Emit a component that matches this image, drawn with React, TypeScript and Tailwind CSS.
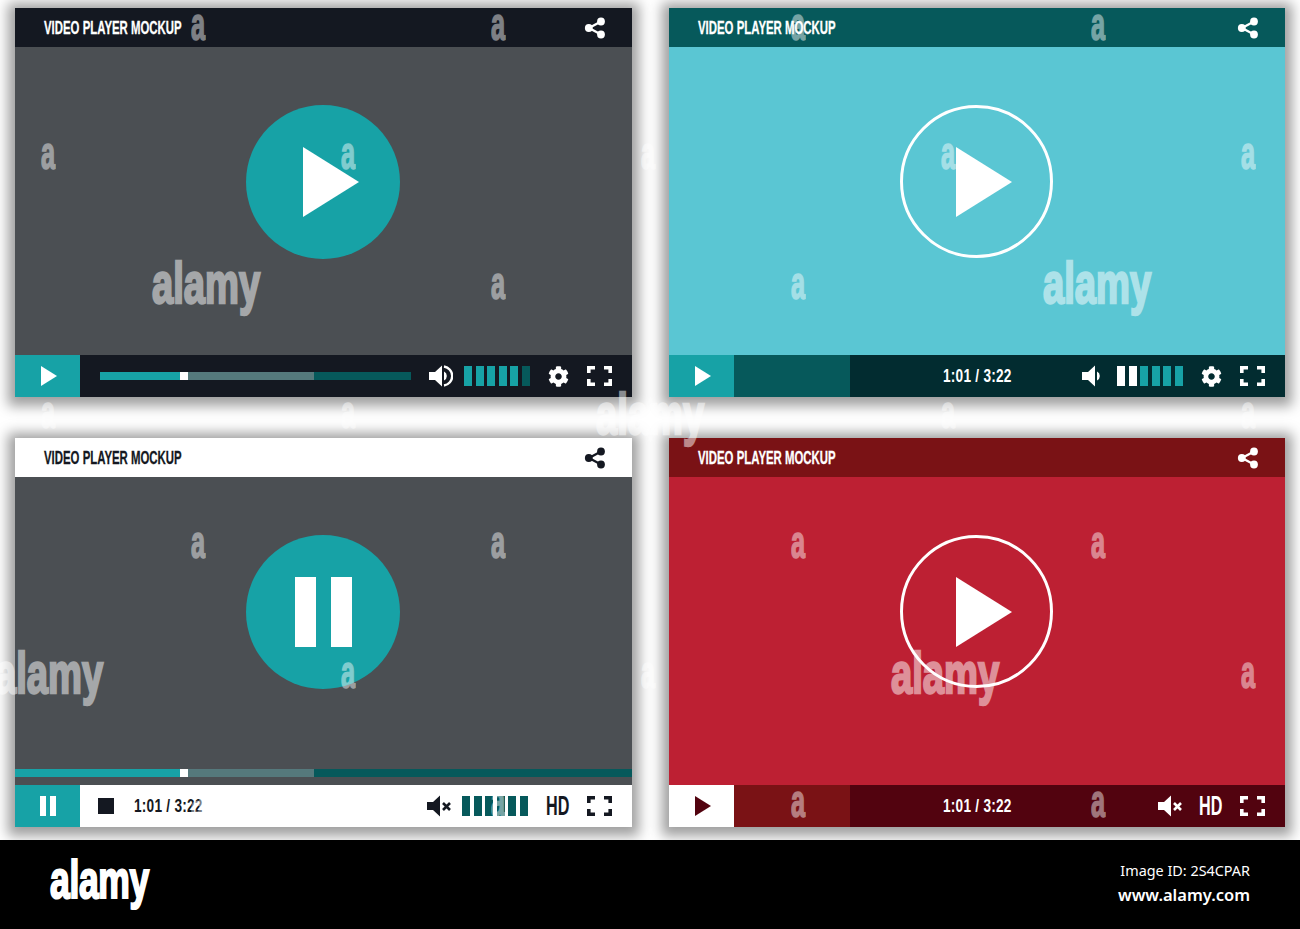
import { FaCog } from "react-icons/fa";
import type { ReactNode } from "react";

const font = "font-['Liberation_Sans',Arial,sans-serif]";

// watermark letters, one class list per tile
const smallMarks = [
  "left-[191px] top-[1px]",
  "left-[491px] top-[1px]",
  "left-[791px] top-[1px]",
  "left-[1091px] top-[1px]",
  "left-[41px] top-[130px]",
  "left-[341px] top-[130px]",
  "left-[641px] top-[130px]",
  "left-[941px] top-[130px]",
  "left-[1241px] top-[130px]",
  "left-[491px] top-[260px]",
  "left-[791px] top-[260px]",
  "left-[41px] top-[389px]",
  "left-[341px] top-[389px]",
  "left-[941px] top-[389px]",
  "left-[1241px] top-[389px]",
  "left-[191px] top-[519px]",
  "left-[491px] top-[519px]",
  "left-[791px] top-[519px]",
  "left-[1091px] top-[519px]",
  "left-[341px] top-[649px]",
  "left-[641px] top-[649px]",
  "left-[1241px] top-[649px]",
  "left-[191px] top-[778px]",
  "left-[491px] top-[778px]",
  "left-[791px] top-[778px]",
  "left-[1091px] top-[778px]",
];

const bigMarks = [
  "left-[152px] top-[255px]",
  "left-[1043px] top-[255px]",
  "left-[596px] top-[386px]",
  "left-[-5px] top-[645px]",
  "left-[891px] top-[645px]",
];

function SmallPlay({ className }: { className: string }) {
  return (
    <svg viewBox="0 0 16 20" className={`h-5 w-4 ${className}`}>
      <polygon points="0,0 16,10 0,20" fill="currentColor" />
    </svg>
  );
}

function ShareIcon() {
  return (
    <svg viewBox="0 0 22 22" className="h-[22px] w-[22px]" fill="currentColor" stroke="currentColor">
      <line x1="5" y1="11" x2="17" y2="4.5" strokeWidth="2.4" />
      <line x1="5" y1="11" x2="17" y2="17.5" strokeWidth="2.4" />
      <circle cx="4.8" cy="11" r="3.9" stroke="none" />
      <circle cx="17" cy="4.5" r="3.9" stroke="none" />
      <circle cx="17" cy="17.5" r="3.9" stroke="none" />
    </svg>
  );
}

function FullscreenIcon() {
  return (
    <svg viewBox="0 0 25 20" className="h-5 w-[25px]" fill="none" stroke="currentColor" strokeWidth="3.6">
      <path d="M1.8 7V1.8H8M17 1.8H23.2V7M1.8 13V18.2H8M17 18.2H23.2V13" />
    </svg>
  );
}

function VolumeIcon({ mode }: { mode: "loud" | "low" | "mute" }) {
  return (
    <svg viewBox="0 0 24 24" className="h-6 w-6" fill="currentColor">
      <polygon points="0,8 6,8 13,1.5 13,22.5 6,16 0,16" />
      {mode === "loud" && (
        <>
          <path d="M15 7.5a5 5 0 0 1 0 9z" />
          <path d="M15 2.5a9.6 9.6 0 0 1 0 19" fill="none" stroke="currentColor" strokeWidth="2.4" />
        </>
      )}
      {mode === "low" && <path d="M15 7.5a5 5 0 0 1 0 9z" />}
      {mode === "mute" && (
        <path d="M16 9l7 7M23 9l-7 7" fill="none" stroke="currentColor" strokeWidth="2.6" />
      )}
    </svg>
  );
}

function VolumeBars({ colors }: { colors: string[] }) {
  return (
    <div className="flex h-5 w-[66px] justify-between">
      {colors.map((c, i) => (
        <div key={i} className={`h-full w-2 ${c}`} />
      ))}
    </div>
  );
}

function Time() {
  return (
    <span className={`${font} block w-[69px] origin-left scale-x-[0.76] whitespace-nowrap text-[18px] leading-none font-bold tracking-[0.3px]`}>
      1:01 / 3:22
    </span>
  );
}

function Hd() {
  return (
    <span className={`${font} block w-[23px] origin-left scale-x-[0.6] text-[27px] leading-none font-bold`}>HD</span>
  );
}

function Progress({ className, playedClass }: { className: string; playedClass: string }) {
  return (
    <div className={`flex h-2 ${className}`}>
      <div className={`shrink-0 bg-[#17a2a6] ${playedClass}`} />
      <div className="w-2 shrink-0 bg-white" />
      <div className="w-[126px] shrink-0 bg-[#55797c]" />
      <div className="flex-1 bg-[#06595b]" />
    </div>
  );
}

type PlayerProps = {
  headerClass: string;
  bodyClass: string;
  center: ReactNode;
  seek?: boolean;
  bar: ReactNode;
  barClass: string;
};

function Player({ headerClass, bodyClass, center, seek, bar, barClass }: PlayerProps) {
  return (
    <div className="flex h-[389px] flex-col shadow-[0_2px_12px_7px_rgba(0,0,0,0.38)]">
      <div className={`flex h-[39px] items-center justify-between pr-[26px] pl-[29px] ${headerClass}`}>
        <span className={`${font} block w-[138px] origin-left scale-x-[0.6] whitespace-nowrap text-[19px] leading-none font-bold [-webkit-text-stroke:0.3px_currentColor]`}>
          VIDEO PLAYER MOCKUP
        </span>
        <ShareIcon />
      </div>
      <div className={`flex h-[308px] flex-col items-center pt-[58px] ${bodyClass}`}>
        {center}
        {seek && (
          <div className="mt-[80px] w-full">
            <Progress className="w-full" playedClass="w-[165px]" />
          </div>
        )}
      </div>
      <div className={`flex h-[42px] items-center ${barClass}`}>{bar}</div>
    </div>
  );
}

const teal = "bg-[#17a2a6]";
const darkTeal = "bg-[#06595b]";

export default function App() {
  return (
    <div className="relative h-[929px] w-[1300px] overflow-hidden bg-white">
      <div className="grid grid-cols-[617px_616px] gap-x-[37px] gap-y-[41px] pt-2 pb-[13px] pl-[15px]">
        {/* dark player */}
        <Player
          headerClass="bg-[#141821] text-white"
          bodyClass="bg-[#4b4f53]"
          barClass="bg-[#141821] text-white"
          center={
            <div className="-ml-px flex h-[154px] w-[154px] items-center justify-center rounded-full bg-[#17a2a6] pl-[16px] text-white">
              <svg viewBox="0 0 56 70" className="h-[70px] w-[56px]">
                <polygon points="0,0 56,35 0,70" fill="currentColor" />
              </svg>
            </div>
          }
          bar={
            <>
              <div className="flex h-full w-[65px] items-center justify-center bg-[#17a2a6] pl-[3px]">
                <SmallPlay className="text-white" />
              </div>
              <Progress className="ml-[20px] w-[311px]" playedClass="w-[80px]" />
              <div className="ml-[18px]">
                <VolumeIcon mode="loud" />
              </div>
              <div className="ml-[11px]">
                <VolumeBars colors={[teal, teal, teal, teal, teal, darkTeal]} />
              </div>
              <FaCog className="ml-[18px] h-[21px] w-[21px]" />
              <div className="ml-[18px]">
                <FullscreenIcon />
              </div>
            </>
          }
        />
        {/* teal player */}
        <Player
          headerClass="bg-[#06595b] text-white"
          bodyClass="bg-[#5ac6d3]"
          barClass="bg-[#022c30] text-white"
          center={
            <div className="-ml-px flex h-[153px] w-[153px] items-center justify-center rounded-full border-[3px] border-white pl-[15px] text-white">
              <svg viewBox="0 0 56 70" className="h-[70px] w-[56px]">
                <polygon points="0,0 56,35 0,70" fill="currentColor" />
              </svg>
            </div>
          }
          bar={
            <>
              <div className="flex h-full w-[65px] items-center justify-center bg-[#17a2a6] pl-[3px]">
                <SmallPlay className="text-white" />
              </div>
              <div className="h-full w-[116px] bg-[#06595b]" />
              <div className="ml-[93px]">
                <Time />
              </div>
              <div className="ml-[70px]">
                <VolumeIcon mode="low" />
              </div>
              <div className="ml-[11px]">
                <VolumeBars colors={["bg-white", "bg-white", teal, teal, teal, teal]} />
              </div>
              <FaCog className="ml-[18px] h-[21px] w-[21px]" />
              <div className="ml-[18px]">
                <FullscreenIcon />
              </div>
            </>
          }
        />
        {/* light player */}
        <Player
          headerClass="bg-white text-[#141821]"
          bodyClass="bg-[#4b4f53]"
          barClass="bg-white text-[#141821]"
          seek
          center={
            <div className="-ml-px flex h-[154px] w-[154px] shrink-0 items-center justify-center gap-[15px] rounded-full bg-[#17a2a6] pb-px">
              <div className="h-[70px] w-[21px] bg-white" />
              <div className="h-[70px] w-[21px] bg-white" />
            </div>
          }
          bar={
            <>
              <div className="flex h-full w-[65px] items-center justify-center gap-1 bg-[#17a2a6]">
                <div className="h-[20px] w-[6px] bg-white" />
                <div className="h-[20px] w-[6px] bg-white" />
              </div>
              <div className="ml-[18px] h-4 w-4 bg-[#141821]" />
              <div className="ml-[20px]">
                <Time />
              </div>
              <div className="ml-[224px]">
                <VolumeIcon mode="mute" />
              </div>
              <div className="ml-[11px]">
                <VolumeBars colors={[darkTeal, darkTeal, darkTeal, darkTeal, darkTeal, darkTeal]} />
              </div>
              <div className="ml-[18px]">
                <Hd />
              </div>
              <div className="ml-[18px]">
                <FullscreenIcon />
              </div>
            </>
          }
        />
        {/* red player */}
        <Player
          headerClass="bg-[#7a1215] text-white"
          bodyClass="bg-[#bd2033]"
          barClass="bg-[#52030f] text-white"
          center={
            <div className="-ml-px flex h-[153px] w-[153px] items-center justify-center rounded-full border-[3px] border-white pl-[15px] text-white">
              <svg viewBox="0 0 56 70" className="h-[70px] w-[56px]">
                <polygon points="0,0 56,35 0,70" fill="currentColor" />
              </svg>
            </div>
          }
          bar={
            <>
              <div className="flex h-full w-[65px] items-center justify-center bg-white pl-[3px]">
                <SmallPlay className="text-[#52030f]" />
              </div>
              <div className="h-full w-[116px] bg-[#7a1215]" />
              <div className="ml-[93px]">
                <Time />
              </div>
              <div className="ml-[146px]">
                <VolumeIcon mode="mute" />
              </div>
              <div className="ml-[17px]">
                <Hd />
              </div>
              <div className="ml-[18px]">
                <FullscreenIcon />
              </div>
            </>
          }
        />
      </div>

      {/* stock photo strip */}
      <div className="flex h-[89px] items-start justify-between bg-black pr-[50px] pl-[50px] text-white">
        <span className={`${font} mt-[13px] block w-[101px] origin-left scale-x-[0.67] text-[53px] leading-none font-bold tracking-[-0.5px] [-webkit-text-stroke:2.2px_white]`}>
          alamy
        </span>
        <div className="mt-[19px] flex flex-col items-end font-['Noto_Sans',sans-serif] text-[14.4px] leading-[24px]">
          <span>Image ID: 2S4CPAR</span>
          <span className="text-[16.5px] font-semibold">www.alamy.com</span>
        </div>
      </div>

      {/* watermark */}
      {smallMarks.map((pos) => (
        <span
          key={pos}
          className={`${font} pointer-events-none absolute ${pos} origin-left scale-x-[0.55] text-[46px] leading-none font-bold text-white opacity-45 [-webkit-text-stroke:1.6px_white]`}
        >
          a
        </span>
      ))}
      {bigMarks.map((pos) => (
        <span
          key={pos}
          className={`${font} pointer-events-none absolute ${pos} origin-left scale-x-[0.67] text-[57px] leading-none font-bold text-white opacity-50 [-webkit-text-stroke:2.4px_white]`}
        >
          alamy
        </span>
      ))}
    </div>
  );
}
